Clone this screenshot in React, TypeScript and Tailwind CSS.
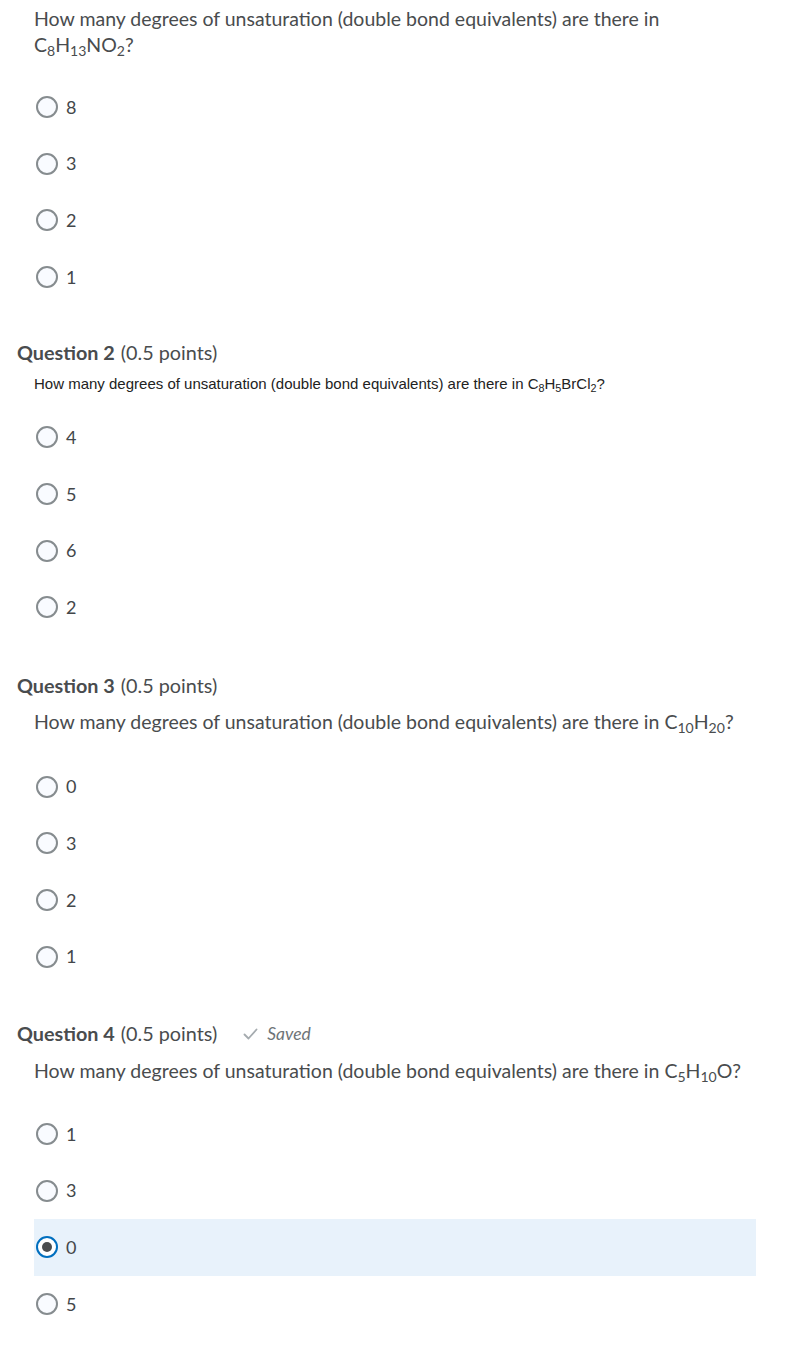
import React from 'react';

type Opt = { label: string; selected?: boolean };

const Radio: React.FC<{ selected?: boolean }> = ({ selected }) =>
  selected ? (
    <span className="w-[22px] h-[22px] rounded-full border-2 border-[#006fbf] bg-white flex items-center justify-center shrink-0">
      <span className="w-[10px] h-[10px] rounded-full bg-[#494c4e]" />
    </span>
  ) : (
    <span className="w-[22px] h-[22px] rounded-full border-2 border-[#868c8f] bg-[#f9fbff] shrink-0" />
  );

const Options: React.FC<{ opts: Opt[] }> = ({ opts }) => (
  <div className="flex flex-col w-[722px]">
    {opts.map((o, i) => (
      <div
        key={i}
        className={`h-[56.6px] flex items-center pl-[2px] gap-[8px] ${o.selected ? 'bg-[#e8f2fb]' : ''}`}
      >
        <Radio selected={o.selected} />
        <span className="text-[18px] text-[#43474a]">{o.label}</span>
      </div>
    ))}
  </div>
);

const Header: React.FC<{ n: number; saved?: boolean }> = ({ n, saved }) => (
  <div className="flex items-center gap-[6px] h-[26px] text-[19.8px] text-[#494c4e] -ml-[17px]">
    <span className="font-bold">Question {n}</span>
    <span>(0.5 points)</span>
    {saved && (
      <span className="pl-[20px] flex items-center gap-[9px] text-[17.5px] italic text-[#6e7477]">
        <svg width="15" height="12" viewBox="0 0 15 12" fill="none">
          <path d="M1.5 6.5 L5.5 10.5 L13.5 1.5" stroke="#a5abaf" strokeWidth="1.8" strokeLinecap="round" strokeLinejoin="round" />
        </svg>
        Saved
      </span>
    )}
  </div>
);

const Sub: React.FC<{ children: React.ReactNode }> = ({ children }) => (
  <span className="text-[0.72em] align-[-0.28em] leading-none">{children}</span>
);

export default function App() {
  return (
    <div className="w-[808px] min-h-[1346px] bg-white pl-[34px] pt-[6px] font-['Lato',sans-serif] text-[#494c4e]">
      <section className="flex flex-col">
        <p className="text-[19.5px] leading-[26px]">
          How many degrees of unsaturation (double bond equivalents) are there in
          <br />
          C<Sub>8</Sub>H<Sub>13</Sub>NO<Sub>2</Sub>?
        </p>
        <div className="pt-[21px]">
          <Options opts={[{ label: '8' }, { label: '3' }, { label: '2' }, { label: '1' }]} />
        </div>
      </section>

      <section className="flex flex-col pt-[34px]">
        <Header n={2} />
        <p className="pt-[10px] leading-[18px] text-[15px] text-[#222] font-['Liberation_Sans',Arial,sans-serif]">
          How many degrees of unsaturation (double bond equivalents) are there in C<Sub>8</Sub>H<Sub>5</Sub>BrCl
          <Sub>2</Sub>?
        </p>
        <div className="pt-[15px]">
          <Options opts={[{ label: '4' }, { label: '5' }, { label: '6' }, { label: '2' }]} />
        </div>
      </section>

      <section className="flex flex-col pt-[37px]">
        <Header n={3} />
        <p className="pt-[10px] text-[19.5px] leading-[26px]">
          How many degrees of unsaturation (double bond equivalents) are there in C<Sub>10</Sub>H<Sub>20</Sub>?
        </p>
        <div className="pt-[24px]">
          <Options opts={[{ label: '0' }, { label: '3' }, { label: '2' }, { label: '1' }]} />
        </div>
      </section>

      <section className="flex flex-col pt-[36px]">
        <Header n={4} saved />
        <p className="pt-[11px] text-[19.5px] leading-[26px]">
          How many degrees of unsaturation (double bond equivalents) are there in C<Sub>5</Sub>H<Sub>10</Sub>O?
        </p>
        <div className="pt-[22px]">
          <Options opts={[{ label: '1' }, { label: '3' }, { label: '0', selected: true }, { label: '5' }]} />
        </div>
      </section>
    </div>
  );
}
